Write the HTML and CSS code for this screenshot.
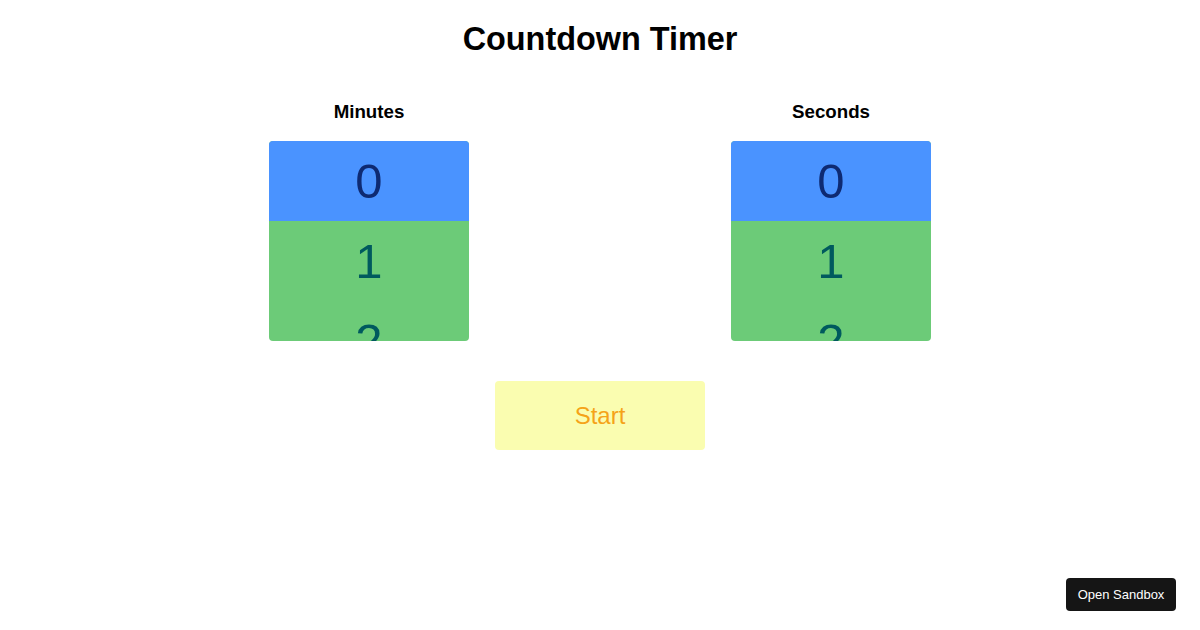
FILE: index.html
```html
<!DOCTYPE html>
<html>
<head>
<meta charset="utf-8">
<link rel="stylesheet" href="styles.css">
</head>
<body>
<div class="app">
  <h1 class="title">Countdown Timer</h1>
  <div class="pickers">
    <div class="picker">
      <h3 class="label">Minutes</h3>
      <div class="wheel">
        <div class="item active">0</div>
        <div class="item">1</div>
        <div class="item">2</div>
      </div>
    </div>
    <div class="picker">
      <h3 class="label">Seconds</h3>
      <div class="wheel">
        <div class="item active">0</div>
        <div class="item">1</div>
        <div class="item">2</div>
      </div>
    </div>
  </div>
  <button class="start">Start</button>
</div>
<button class="sandbox">Open Sandbox</button>
</body>
</html>
```

FILE: styles.css
```css
html, body {
  margin: 0;
  padding: 0;
  background: #ffffff;
  font-family: "Liberation Sans", Arial, sans-serif;
}
.app {
  display: flex;
  flex-direction: column;
  align-items: center;
}
.title {
  margin: 21px 0 0;
  font-size: 32.4px;
  line-height: 37px;
  font-weight: 700;
  color: #000;
}
.pickers {
  display: flex;
  gap: 262px;
  margin-top: 43px;
}
.picker {
  display: flex;
  flex-direction: column;
  align-items: center;
}
.label {
  margin: 0 0 19px;
  font-size: 18.72px;
  line-height: 21px;
  font-weight: 700;
  color: #000;
}
.wheel {
  width: 200px;
  height: 200px;
  overflow: hidden;
  border-radius: 4px;
  background: #6ccb78;
}
.item {
  height: 80px;
  display: flex;
  align-items: center;
  justify-content: center;
  font-size: 49px;
  color: #005a5e;
}
.item.active {
  background: #4a93ff;
  color: #0e2a72;
}
.start {
  margin-top: 40px;
  width: 210px;
  height: 69px;
  border: none;
  border-radius: 4px;
  background: #fafdb0;
  color: #f5a318;
  font-family: "Liberation Sans", Arial, sans-serif;
  font-size: 24px;
  padding: 1px 0 0;
}
.sandbox {
  position: fixed;
  right: 24px;
  bottom: 19px;
  width: 110px;
  height: 33px;
  border: none;
  border-radius: 4px;
  background: #151515;
  color: #ffffff;
  font-family: "Liberation Sans", Arial, sans-serif;
  font-size: 13px;
  padding: 0;
}
```
